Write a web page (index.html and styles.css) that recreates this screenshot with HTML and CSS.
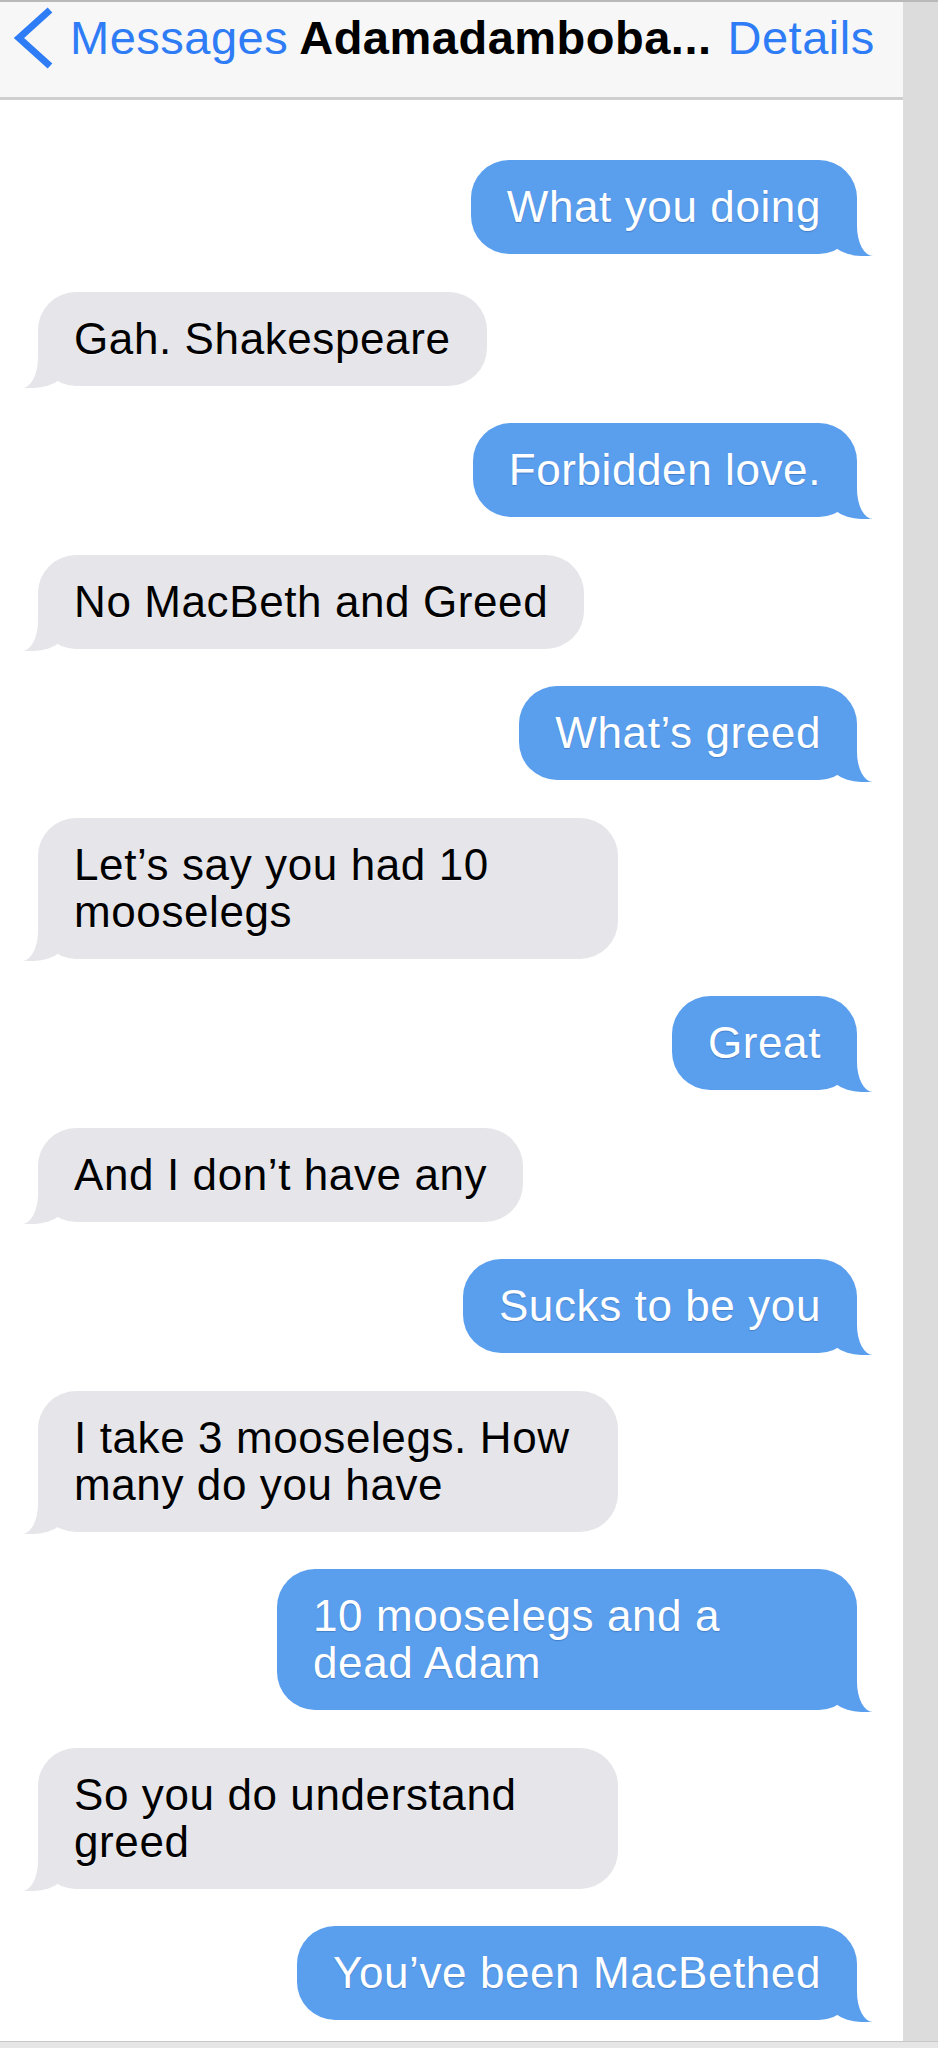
FILE: index.html
```html
<!DOCTYPE html>
<html lang="en">
<head>
    <meta charset="UTF-8">
    <meta name="viewport" content="width=device-width, initial-scale=1.0">
    <title>Messages</title>
    <link rel="stylesheet" href="styles.css">
</head>
<body>
    <div class="screen">
        <div class="pane">
            <header class="nav">
                <svg class="back-icon" width="44" height="62" viewBox="0 0 44 62">
                    <polyline points="38,3 7,31 38,59" fill="none" stroke="#2e7cf6" stroke-width="7"/>
                </svg>
                <span class="back-label">Messages</span>
                <span class="title">Adamadamboba...</span>
                <span class="details">Details</span>
            </header>

            <div class="thread">
                <div class="msg sent">What you doing</div>
                <div class="msg recv">Gah. Shakespeare</div>
                <div class="msg sent">Forbidden love.</div>
                <div class="msg recv">No MacBeth and Greed</div>
                <div class="msg sent">What’s greed</div>
                <div class="msg recv">Let’s say you had 10 mooselegs</div>
                <div class="msg sent">Great</div>
                <div class="msg recv">And I don’t have any</div>
                <div class="msg sent">Sucks to be you</div>
                <div class="msg recv">I take 3 mooselegs. How many do you have</div>
                <div class="msg sent">10 mooselegs and a dead Adam</div>
                <div class="msg recv">So you do understand greed</div>
                <div class="msg sent">You’ve been MacBethed</div>
            </div>
        </div>
        <div class="scrollbar"></div>
    </div>
    <div class="bottom-edge"></div>
</body>
</html>
```

FILE: styles.css
```css
body {
    margin: 0;
    width: 938px;
    height: 2048px;
    background-color: #fff;
    font-family: "Liberation Sans", Arial, sans-serif;
    overflow: hidden;
}
.screen {
    display: flex;
    height: 2041px;
    box-sizing: border-box;
    border-top: 2px solid #b9b9b9;
}
.pane {
    flex: 1;
    display: flex;
    flex-direction: column;
    background-color: #fff;
}
.scrollbar {
    width: 35px;
    background-color: #dcdcdc;
}
.bottom-edge {
    height: 6px;
    border-top: 1px solid #c8c8c8;
    background-color: #e6e6e6;
}

/* top bar */
.nav {
    display: flex;
    align-items: center;
    height: 98px;
    box-sizing: border-box;
    padding: 6px 0 30px 12px;
    background-color: #f7f7f7;
    border-bottom: 3px solid #cfcfcf;
    font-size: 47px;
    line-height: 52px;
    letter-spacing: 0.5px;
    white-space: nowrap;
}
.back-icon {
    display: block;
    flex-shrink: 0;
}
.back-label {
    margin-left: 14px;
    color: #2e7cf6;
}
.title {
    margin-left: 11px;
    font-weight: bold;
    color: #000;
}
.details {
    margin-left: 16px;
    color: #2e7cf6;
}

/* conversation */
.thread {
    display: flex;
    flex-direction: column;
    gap: 37.5px;
    padding-top: 60px;
}
.msg {
    position: relative;
    z-index: 0;
    max-width: 580px;
    box-sizing: border-box;
    padding: 23px 36px 24px;
    border-radius: 38px;
    font-size: 44px;
    line-height: 47px;
    letter-spacing: 0.6px;
}
.msg::before,
.msg::after {
    content: "";
    position: absolute;
    z-index: -1;
    bottom: -2px;
}
.sent {
    align-self: flex-end;
    margin-right: 46px;
    background-color: #5a9eee;
    color: #fff;
    text-shadow: 0 1px 1px rgba(20, 60, 120, 0.3);
}
.sent::before {
    right: -16px;
    width: 48px;
    height: 40px;
    background-color: #5a9eee;
    border-bottom-left-radius: 36px 28px;
}
.sent::after {
    left: 100%;
    width: 30px;
    height: 40px;
    background-color: #fff;
    border-bottom-left-radius: 16px 30px;
}
.recv {
    align-self: flex-start;
    margin-left: 38px;
    background-color: #e5e5ea;
    color: #000;
    text-shadow: 0 1px 0 rgba(255, 255, 255, 0.5);
}
.recv::before {
    left: -16px;
    width: 48px;
    height: 40px;
    background-color: #e5e5ea;
    border-bottom-right-radius: 36px 28px;
}
.recv::after {
    right: 100%;
    width: 30px;
    height: 40px;
    background-color: #fff;
    border-bottom-right-radius: 16px 30px;
}
```
